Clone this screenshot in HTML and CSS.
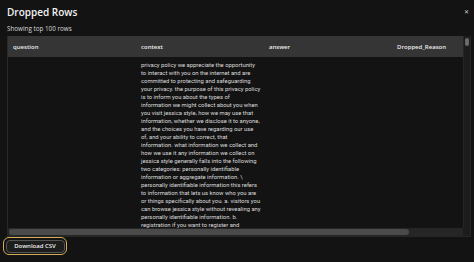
FILE: index.html
```html
<!DOCTYPE html>
<html>
<head>
<meta charset="utf-8">
<link rel="stylesheet" href="styles.css">
</head>
<body>
<div class="modal">
  <div class="modal-head">
    <h1 class="title">Dropped Rows</h1>
    <span class="close">&#x2715;</span>
  </div>
  <p class="sub">Showing top 100 rows</p>
  <div class="frame">
    <div class="viewport">
      <div class="table">
        <div class="row head">
          <div class="cell">question</div>
          <div class="cell">context</div>
          <div class="cell">answer</div>
          <div class="cell">Dropped_Reason</div>
        </div>
        <div class="row body">
          <div class="cell"></div>
          <div class="cell wrap">privacy policy we appreciate the opportunity<br>to interact with you on the internet and are<br>committed to protecting and safeguarding<br>your privacy. the purpose of this privacy policy<br>is to inform you about the types of<br>information we might collect about you when<br>you visit jessica style, how we may use that<br>information, whether we disclose it to anyone,<br>and the choices you have regarding our use<br>of, and your ability to correct, that<br>information. what information we collect and<br>how we use it any information we collect on<br>jessica style generally falls into the following<br>two categories: personally identifiable<br>information or aggregate information. \<br>personally identifiable information this refers<br>to information that lets us know who you are<br>or things specifically about you. a. visitors you<br>can browse jessica style without revealing any<br>personally identifiable information. b.<br>registration if you want to register and</div>
          <div class="cell"></div>
          <div class="cell"></div>
        </div>
      </div>
    </div>
    <div class="vbar"><div class="vthumb"></div></div>
    <div class="hbar"><div class="hthumb"></div></div>
    <div class="corner"></div>
  </div>
  <div class="foot">
    <span class="ring"><button class="btn">Download CSV</button></span>
  </div>
</div>
</body>
</html>
```
FILE: styles.css
```css
* { box-sizing: border-box; }
html, body { margin: 0; padding: 0; }
body {
  background: #131313;
  color: #e6e6e6;
  font-family: "Open Sans", "Noto Sans", sans-serif;
  width: 474px;
  height: 262px;
  overflow: hidden;
}
.modal {
  display: flex;
  flex-direction: column;
  padding: 0 4px 0 7px;
  height: 262px;
}
.modal-head {
  display: flex;
  align-items: center;
  justify-content: space-between;
  height: 22px;
  padding-top: 1px;
}
.title {
  margin: 0;
  font-size: 10px;
  font-weight: 600;
  color: #f2f2f2;
}
.close {
  font-size: 6px;
  color: #cfcfcf;
  margin-right: 1px;
}
.sub {
  margin: 0;
  font-size: 6.3px;
  color: #d8d8d8;
  height: 14px;
  line-height: 14px;
}
.frame {
  display: grid;
  grid-template-columns: 456px 7px;
  grid-template-rows: 192px 8px;
  border-right: 1px solid #262626;
  border-bottom: 1px solid #262626;
  width: 464px;
  height: 201px;
  flex: none;
}
.viewport {
  overflow: hidden;
  border-left: 1px solid #2a2a2a;
}
.table { width: 512px; }
.row { display: grid; grid-template-columns: repeat(4, 128px); }
.head {
  background: #353535;
  height: 21px;
  align-items: center;
  font-weight: 600;
  font-size: 6px;
  color: #ececec;
}
.head .cell { padding: 0 5px; }
.body .cell {
  padding: 4px 3px 4px 5px;
  font-family: Roboto, "Open Sans", sans-serif;
  font-size: 5.85px;
  line-height: 8px;
  color: #dcdcdc;
}
.body .wrap { white-space: nowrap; }
.vbar {
  background: #1c1c1c;
  border-left: 1px solid #262626;
  padding: 2px 1px;
}
.vthumb {
  height: 8px;
  border-radius: 3px;
  background: #6a6a6a;
  width: 4px;
  margin: 0 auto;
}
.hbar {
  background: #262626;
  padding: 1px 0;
}
.hthumb {
  width: 400px;
  height: 6px;
  margin-left: 2px;
  border-radius: 3px;
  background: #4a4a4a;
}
.corner { background: #1c1c1c; }
.foot {
  display: flex;
  margin-left: -4px;
}
.ring {
  display: block;
  border: 1.5px solid #d4ad57;
  border-radius: 6px;
  padding: 1.5px;
}
.btn {
  display: block;
  background: #1d1d1d;
  border: 1px solid #555;
  border-radius: 4px;
  color: #f0f0f0;
  font-family: "Open Sans", "Noto Sans", sans-serif;
  font-weight: 600;
  font-size: 6px;
  height: 13px;
  width: 59px;
  padding: 0;
}
```
